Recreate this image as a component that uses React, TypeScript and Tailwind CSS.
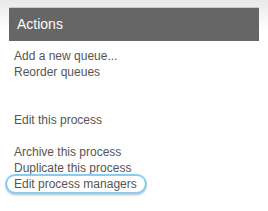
import React from "react";

export default function App() {
  const font = { fontFamily: '"Liberation Sans", Arial, Helvetica, sans-serif' };
  return (
    <div className="w-[268px] h-[211px] bg-gradient-to-b from-[#e9e9e9] via-white via-[14%] to-white overflow-hidden" style={font}>
      <div className="pt-[7px] pl-[9px] pr-[9px]">
        <div className="border-t border-[#c9c9c9] bg-[#666666] h-[34px] flex items-center pl-[8px] text-white text-[14px]">
          Actions
        </div>
        <div className="pt-[7px] pl-[5px] text-[12px] leading-[16px] text-[#555555]">
          <div>Add a new queue...</div>
          <div>Reorder queues</div>
          <div className="h-[32px]" />
          <div>Edit this process</div>
          <div className="h-[16px]" />
          <div>Archive this process</div>
          <div>Duplicate this process</div>
          <div>
            <span className="inline-block -ml-[7px] pl-[7px] pr-[8px] rounded-[8px] shadow-[0_0_0_2px_#86cdf5,0_2px_3px_1px_rgba(0,0,0,0.28)]">
              Edit process managers
            </span>
          </div>
        </div>
      </div>
    </div>
  );
}
